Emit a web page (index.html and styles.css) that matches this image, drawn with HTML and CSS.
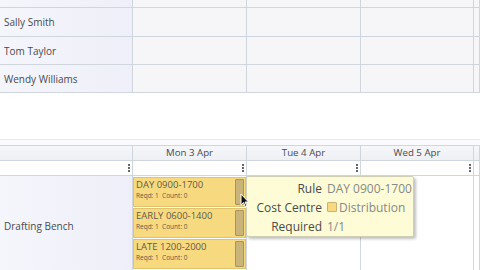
FILE: index.html
```html
<!DOCTYPE html>
<html>
<head>
<meta charset="utf-8">
<link rel="stylesheet" href="styles.css">
</head>
<body>
<div class="top">
  <div class="row r0"><div class="name"></div><div class="cell"></div><div class="cell"></div><div class="cell"></div><div class="cell"></div></div>
  <div class="row r1"><div class="name">Sally Smith</div><div class="cell"></div><div class="cell"></div><div class="cell"></div><div class="cell"></div></div>
  <div class="row r2"><div class="name">Tom Taylor</div><div class="cell"></div><div class="cell"></div><div class="cell"></div><div class="cell"></div></div>
  <div class="row r3"><div class="name">Wendy Williams</div><div class="cell"></div><div class="cell"></div><div class="cell"></div><div class="cell"></div></div>
</div>
<div class="gap"></div>
<div class="bottom">
  <div class="strip"></div>
  <div class="row hdr"><div class="hname"></div><div class="hcell">Mon 3 Apr</div><div class="hcell">Tue 4 Apr</div><div class="hcell">Wed 5 Apr</div><div class="hcell"></div></div>
  <div class="row drow">
    <div class="dcell"><span class="dots"><i></i><i></i><i></i></span></div>
    <div class="dcell"><span class="dots"><i></i><i></i><i></i></span></div>
    <div class="dcell"><span class="dots"><i></i><i></i><i></i></span></div>
    <div class="dcell"><span class="dots"><i></i><i></i><i></i></span></div>
    <div class="dcell"></div>
  </div>
  <div class="row brow">
    <div class="bname">Drafting Bench</div>
    <div class="bcell mon">
      <div class="shift"><div class="stext"><div class="st">DAY 0900-1700</div><div class="ss">Reqd: 1&nbsp; Count: 0</div></div><div class="handle"></div></div>
      <div class="shift"><div class="stext"><div class="st">EARLY 0600-1400</div><div class="ss">Reqd: 1&nbsp; Count: 0</div></div><div class="handle"></div></div>
      <div class="shift"><div class="stext"><div class="st">LATE 1200-2000</div><div class="ss">Reqd: 1&nbsp; Count: 0</div></div><div class="handle"></div></div>
    </div>
    <div class="bcell"></div>
    <div class="bcell"></div>
    <div class="bcell"></div>
  </div>
  <div class="tooltip">
    <div class="tl">Rule</div><div class="tv">DAY 0900-1700</div>
    <div class="tl">Cost Centre</div><div class="tv"><span class="swatch"></span>Distribution</div>
    <div class="tl">Required</div><div class="tv">1/1</div>
  </div>
  <svg class="cursor" width="10" height="16" viewBox="0 0 10 16"><path d="M1 1 L1 12 L3.5 9.5 L5.5 14 L7 13.3 L5 9 L8.5 9 Z" fill="#111" stroke="#fff" stroke-width="1"/></svg>
</div>
</body>
</html>
```
FILE: styles.css
```css
html, body { margin: 0; padding: 0; background: #fff; }
body { width: 480px; height: 270px; overflow: hidden; font-family: "Open Sans", "Noto Sans", sans-serif; color: #444; }
.row { display: grid; grid-template-columns: 133px 114px 114px 113px 1fr; }
.top .row > div { box-sizing: border-box; border-right: 1px solid #cfd6dd; border-bottom: 1px solid #cfd6dd; }
.top .cell { background: #f6f6f8; }
.top .name { background: linear-gradient(to right, #f5f5fc, #efeff9); font-size: 10px; padding-left: 4px; display: flex; align-items: center; color: #4a4a4a; }
.r0 { height: 8px; }
.r1 { height: 29px; }
.r2 { height: 28px; }
.r3 { height: 28px; }
.gap { height: 46px; }
.bottom { position: relative; }
.strip { height: 6px; border-top: 1px solid #e6e9ee; background: #fbfbfd; box-sizing: border-box; }
.hdr > div { box-sizing: border-box; height: 16px; border-top: 1px solid #cfd6dd; border-bottom: 1px solid #cfd6dd; border-right: 1px solid #cfd6dd; background: linear-gradient(#f6f7fa, #eef0f4); font-size: 9.7px; text-align: center; line-height: 14px; color: #4a4a4a; }
.drow > div { box-sizing: border-box; height: 15px; border-bottom: 1px solid #cfd6dd; border-right: 1px solid #cfd6dd; background: #fff; display: flex; justify-content: flex-end; align-items: center; padding-right: 2px; }
.dots { display: flex; flex-direction: column; gap: 1px; }
.dots i { width: 2px; height: 2px; background: #666; display: block; }
.brow > div { box-sizing: border-box; height: 95px; border-right: 1px solid #cfd6dd; background: #fff; }
.brow .bname { background: linear-gradient(to right, #f5f5fc, #efeff9); font-size: 10px; padding-left: 4px; display: flex; align-items: center; color: #4a4a4a; padding-top: 4px; }
.mon { display: flex; flex-direction: column; gap: 1px; padding-top: 1px; }
.shift { height: 30px; display: flex; background: #f7da80; border: 1px solid #e0c36e; box-sizing: border-box; }
.stext { flex: 1; padding: 0 0 0 2px; color: #5f5a4a; }
.st { font-size: 9.5px; line-height: 12px; margin-top: 1px; }
.ss { font-size: 6.5px; line-height: 9px; }
.handle { width: 7px; margin: 1px 1px 1px 0; background: #c9b47a; border: 1px solid #a8955e; border-radius: 1px; }
.tooltip { position: absolute; left: 246px; top: 37px; width: 168px; height: 61px; box-sizing: border-box; background: #fdfcd6; border: 1px solid #cfcfb8; border-radius: 2px; box-shadow: 2px 2px 3px rgba(0,0,0,0.25); display: grid; grid-template-columns: 75px auto; column-gap: 5px; align-content: center; row-gap: 0; font-size: 12px; line-height: 19px; padding-top: 1px; }
.tl { text-align: right; color: #4a4a4a; }
.tv { color: #888; display: flex; align-items: center; white-space: nowrap; }
.swatch { width: 10px; height: 10px; background: #f7da80; border: 1px solid #c8b276; margin-right: 2px; box-sizing: border-box; border-radius: 1px; }
.cursor { position: absolute; left: 240px; top: 54px; }
```
